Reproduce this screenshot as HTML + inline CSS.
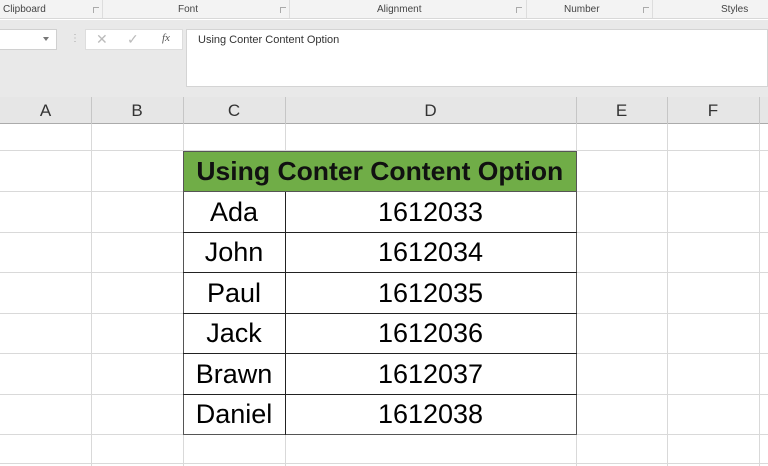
<!DOCTYPE html><html><head><style>
*{margin:0;padding:0;box-sizing:border-box}
body{width:768px;height:466px;overflow:hidden;background:#fff;font-family:"Liberation Sans",sans-serif;position:relative}
.a{position:absolute}
.rl{font-size:10px;color:#444;top:4px}
.gl{background:#d9d9d9}
.c{position:absolute;display:flex;align-items:center;justify-content:center;font-size:27px;color:#000}
.dl{position:absolute;top:7px;width:6px;height:6px;border:1px solid #aaa;border-right:none;border-bottom:none}
</style></head><body>
<div class="a" style="left:0;top:0;width:768px;height:19px;background:#f3f3f3;border-bottom:1px solid #d8d8d8"></div>
<div class="a rl" style="left:3px">Clipboard</div>
<div class="a rl" style="left:178px">Font</div>
<div class="a rl" style="left:377px">Alignment</div>
<div class="a rl" style="left:564px">Number</div>
<div class="a rl" style="left:721px">Styles</div>
<div class="dl" style="left:93px"></div><div class="dl" style="left:280px"></div><div class="dl" style="left:516px"></div><div class="dl" style="left:643px"></div>
<div class="a" style="left:102px;top:0;width:1px;height:18px;background:#ddd"></div>
<div class="a" style="left:289px;top:0;width:1px;height:18px;background:#ddd"></div>
<div class="a" style="left:526px;top:0;width:1px;height:18px;background:#ddd"></div>
<div class="a" style="left:652px;top:0;width:1px;height:18px;background:#ddd"></div>
<div class="a" style="left:0;top:20px;width:768px;height:77px;background:#e9e9e9"></div>
<div class="a" style="left:0;top:29px;width:57px;height:21px;background:#fff;border:1px solid #d0d0d0;border-left:none"></div>
<div class="a" style="left:43px;top:37px;border:3px solid transparent;border-top:4px solid #777"></div>
<div class="a" style="left:70px;top:33px;font-size:10px;color:#aaa">⋮</div>
<div class="a" style="left:85px;top:29px;width:98px;height:21px;background:#fff;border:1px solid #ddd"></div>
<div class="a" style="left:96px;top:31px;font-size:14px;color:#bbb">✕</div>
<div class="a" style="left:127px;top:31px;font-size:14px;color:#bbb">✓</div>
<div class="a" style="left:162px;top:32px;font-size:11px;color:#555;font-style:italic;font-family:'Liberation Serif',serif">fx</div>
<div class="a" style="left:186px;top:29px;width:582px;height:58px;background:#fff;border:1px solid #d4d4d4"></div>
<div class="a" style="left:198px;top:34px;font-size:11px;color:#333">Using Conter Content Option</div>
<div class="a" style="left:0;top:97px;width:768px;height:27px;background:#e6e6e6;border-bottom:1px solid #ababab"></div>
<div class="a" style="left:0;top:124px;width:768px;height:342px;background:#fff"></div>
<div class="c" style="left:0;top:97px;width:91px;height:27px;font-size:17px;color:#333">A</div>
<div class="c" style="left:91px;top:97px;width:92px;height:27px;font-size:17px;color:#333">B</div>
<div class="c" style="left:183px;top:97px;width:102px;height:27px;font-size:17px;color:#333">C</div>
<div class="c" style="left:285px;top:97px;width:291px;height:27px;font-size:17px;color:#333">D</div>
<div class="c" style="left:576px;top:97px;width:91px;height:27px;font-size:17px;color:#333">E</div>
<div class="c" style="left:667px;top:97px;width:92px;height:27px;font-size:17px;color:#333">F</div>
<div class="a" style="left:91px;top:97px;width:1px;height:27px;background:#c6c6c6"></div>
<div class="a" style="left:183px;top:97px;width:1px;height:27px;background:#c6c6c6"></div>
<div class="a" style="left:285px;top:97px;width:1px;height:27px;background:#c6c6c6"></div>
<div class="a" style="left:576px;top:97px;width:1px;height:27px;background:#c6c6c6"></div>
<div class="a" style="left:667px;top:97px;width:1px;height:27px;background:#c6c6c6"></div>
<div class="a" style="left:759px;top:97px;width:1px;height:27px;background:#c6c6c6"></div>
<div class="a gl" style="left:91px;top:124px;width:1px;height:342px"></div>
<div class="a gl" style="left:183px;top:124px;width:1px;height:342px"></div>
<div class="a gl" style="left:285px;top:124px;width:1px;height:342px"></div>
<div class="a gl" style="left:576px;top:124px;width:1px;height:342px"></div>
<div class="a gl" style="left:667px;top:124px;width:1px;height:342px"></div>
<div class="a gl" style="left:759px;top:124px;width:1px;height:342px"></div>
<div class="a gl" style="left:0;top:150px;width:768px;height:1px"></div>
<div class="a gl" style="left:0;top:191px;width:768px;height:1px"></div>
<div class="a gl" style="left:0;top:232px;width:768px;height:1px"></div>
<div class="a gl" style="left:0;top:272px;width:768px;height:1px"></div>
<div class="a gl" style="left:0;top:313px;width:768px;height:1px"></div>
<div class="a gl" style="left:0;top:353px;width:768px;height:1px"></div>
<div class="a gl" style="left:0;top:394px;width:768px;height:1px"></div>
<div class="a gl" style="left:0;top:434px;width:768px;height:1px"></div>
<div class="a gl" style="left:0;top:463px;width:768px;height:1px"></div>
<div class="a" style="left:183px;top:151px;width:394px;height:284px;background:#fff;border:1px solid #555"></div>
<div class="c" style="left:183px;top:151px;width:394px;height:41px;background:#70ad47;border:1px solid #555;font-weight:bold;font-size:26px;color:#111"><span style="display:inline-block;transform:scaleX(1.02)">Using Conter Content Option</span></div>
<div class="a" style="left:285px;top:192px;width:1px;height:243px;background:#222"></div>
<div class="a" style="left:183px;top:232px;width:394px;height:1px;background:#222"></div>
<div class="a" style="left:183px;top:272px;width:394px;height:1px;background:#222"></div>
<div class="a" style="left:183px;top:313px;width:394px;height:1px;background:#222"></div>
<div class="a" style="left:183px;top:353px;width:394px;height:1px;background:#222"></div>
<div class="a" style="left:183px;top:394px;width:394px;height:1px;background:#222"></div>
<div class="c" style="left:183px;top:192px;width:102px;height:40px">Ada</div>
<div class="c" style="left:285px;top:192px;width:291px;height:40px">1612033</div>
<div class="c" style="left:183px;top:232px;width:102px;height:40px">John</div>
<div class="c" style="left:285px;top:232px;width:291px;height:40px">1612034</div>
<div class="c" style="left:183px;top:273px;width:102px;height:40px">Paul</div>
<div class="c" style="left:285px;top:273px;width:291px;height:40px">1612035</div>
<div class="c" style="left:183px;top:313px;width:102px;height:40px">Jack</div>
<div class="c" style="left:285px;top:313px;width:291px;height:40px">1612036</div>
<div class="c" style="left:183px;top:354px;width:102px;height:40px">Brawn</div>
<div class="c" style="left:285px;top:354px;width:291px;height:40px">1612037</div>
<div class="c" style="left:183px;top:394px;width:102px;height:40px">Daniel</div>
<div class="c" style="left:285px;top:394px;width:291px;height:40px">1612038</div>
</body></html>
